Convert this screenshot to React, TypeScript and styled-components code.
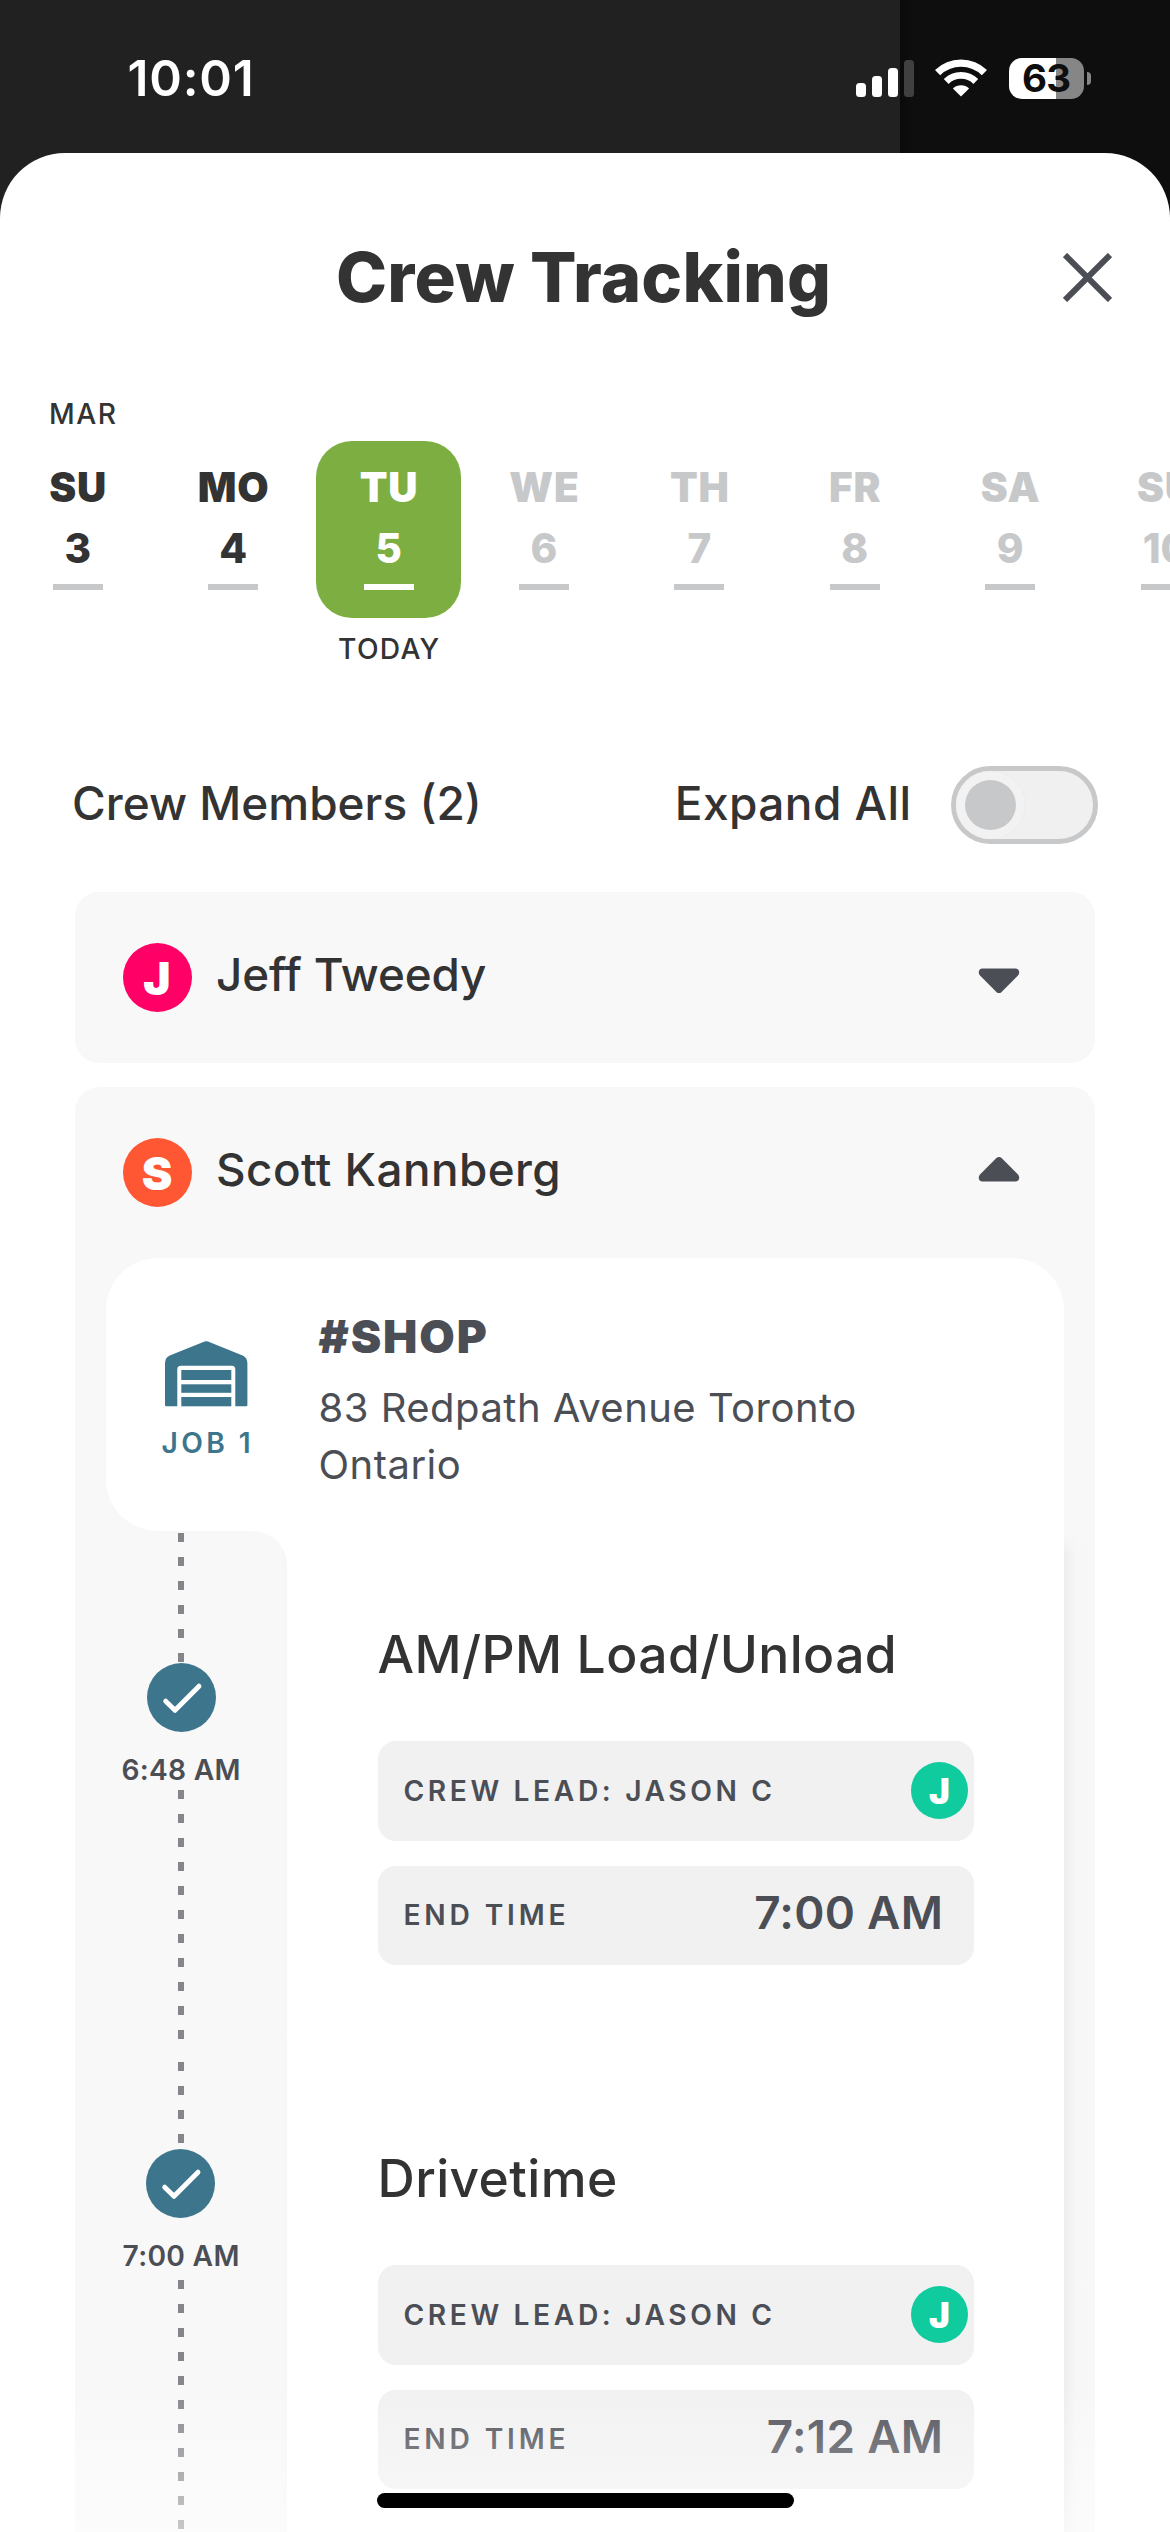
import styled, { createGlobalStyle } from "styled-components";

const ink = "#333333";
const slate = "#4c4e56";
const teal = "#3d768c";
const muted = "#c7c8ca";
const panel = "#f8f8f8";
const field = "#f1f1f1";

const GlobalStyle = createGlobalStyle`
  * { box-sizing: border-box; }
  html, body { margin: 0; padding: 0; background: #fff; }
  body { font-family: Inter, "Open Sans", sans-serif; color: ${ink}; }
`;

const Screen = styled.div`
  position: relative;
  display: flex;
  flex-direction: column;
  width: 1170px;
  height: 2532px;
  overflow: hidden;
  background: linear-gradient(90deg, #212121 900px, #0a0a0a 900px, #0e0e0e 912px);
`;

const Text = styled.span<{
  $size: number;
  $weight?: number;
  $spacing?: number;
  $line?: number;
  $color?: string;
}>`
  display: block;
  font-size: ${(p) => p.$size}px;
  font-weight: ${(p) => p.$weight ?? 600};
  letter-spacing: ${(p) => p.$spacing ?? 0}px;
  margin-right: ${(p) => -(p.$spacing ?? 0)}px;
  line-height: ${(p) => p.$line ?? 60}px;
  color: ${(p) => p.$color ?? ink};
  white-space: nowrap;
`;

/* Status bar */

const StatusBar = styled.div`
  display: flex;
  flex: none;
  align-items: center;
  justify-content: space-between;
  height: 153px;
  padding: 3px 79px 0 127.5px;
`;

const StatusIcons = styled.div`
  display: flex;
  align-items: center;
`;

const Bars = styled.div`
  display: flex;
  align-items: flex-end;
  gap: 6px;
  height: 37px;
  margin-right: 21px;
`;

const Bar = styled.span<{ $height: number; $dim?: boolean }>`
  width: 10px;
  height: ${(p) => p.$height}px;
  border-radius: 3.5px;
  background: ${(p) => (p.$dim ? "#404040" : "#fff")};
`;

const Battery = styled.div`
  display: flex;
  align-items: center;
  justify-content: center;
  width: 75px;
  height: 41px;
  margin-left: 22px;
  border-radius: 13px;
  background: linear-gradient(90deg, #fff 47px, #868686 47px);
`;

const BatteryNub = styled.span`
  width: 4px;
  height: 13px;
  margin-left: 3px;
  border-radius: 0 5px 5px 0;
  background: #868686;
`;

/* Sheet */

const Sheet = styled.main`
  display: flex;
  flex: 1;
  flex-direction: column;
  border-radius: 65px 65px 0 0;
  background: #fff;
  overflow: hidden;
`;

const Header = styled.header`
  display: grid;
  grid-template-columns: 1fr auto 1fr;
  flex: none;
  align-items: center;
  height: 248px;
  padding: 0 58px 0 55px;
`;

const CloseButton = styled.button`
  display: flex;
  grid-column: 3;
  justify-self: end;
  padding: 0;
  border: 0;
  background: none;
`;

const Month = styled.div`
  flex: none;
  height: 40px;
  padding-left: 49px;
`;

const Week = styled.div`
  display: flex;
  flex: none;
  gap: 10.9px;
  height: 232px;
  padding-left: 5.6px;
  overflow: hidden;
`;

const DayColumn = styled.div`
  display: flex;
  flex: none;
  flex-direction: column;
  align-items: center;
  gap: 18px;
  width: 144.5px;
`;

const DayTile = styled.div<{ $active?: boolean }>`
  display: flex;
  flex-direction: column;
  align-items: center;
  width: 100%;
  height: 177px;
  padding-top: 24px;
  border-radius: 36px;
  background: ${(p) => (p.$active ? "#7cae42" : "transparent")};
`;

const DayNumber = styled.div`
  margin: 15.5px 0 13.5px;
`;

const DayMark = styled.span<{ $active?: boolean }>`
  width: 50px;
  height: 6px;
  background: ${(p) => (p.$active ? "#fff" : muted)};
`;

const CrewBar = styled.div`
  display: flex;
  flex: none;
  align-items: center;
  justify-content: space-between;
  height: 78px;
  margin: 93px 72px 48px 72px;
`;

const ExpandAll = styled.label`
  display: flex;
  align-items: center;
  gap: 40px;
`;

const Raised = styled.div`
  padding-bottom: 5px;
`;

const Toggle = styled.span`
  display: flex;
  align-items: center;
  width: 147px;
  height: 78px;
  border: 5px solid ${muted};
  border-radius: 39px;
  background: #f0f0f0;
`;

const Knob = styled.span`
  width: 69px;
  height: 68px;
  border: 9px solid #f2f2f2;
  border-radius: 50%;
  background: ${muted};
  box-shadow: 0 0 1px #dcdcdc;
`;

/* Crew cards */

const CrewCard = styled.section<{ $open?: boolean }>`
  display: flex;
  flex: ${(p) => (p.$open ? "1" : "none")};
  flex-direction: column;
  margin: 0 75px ${(p) => (p.$open ? 0 : 24)}px;
  border-radius: ${(p) => (p.$open ? "24px 24px 0 0" : "24px")};
  background: ${panel};
`;

const CrewHeader = styled.div<{ $open?: boolean }>`
  display: flex;
  flex: none;
  align-items: center;
  height: 171px;
  padding: 0 75.5px 0 47.5px;

  > svg {
    margin-left: auto;
    margin-top: ${(p) => (p.$open ? -8 : 7)}px;
  }
`;

const Avatar = styled.span<{ $size: number; $color: string }>`
  display: flex;
  flex: none;
  align-items: center;
  justify-content: center;
  width: ${(p) => p.$size}px;
  height: ${(p) => p.$size}px;
  border-radius: 50%;
  background: ${(p) => p.$color};
`;

const CrewName = styled.div`
  padding: 0 0 6px 24.5px;
`;

const JobCard = styled.div`
  display: grid;
  grid-template-columns: 200px 1fr;
  flex: none;
  height: 273px;
  margin: 0 31px;
  border-radius: 52px 52px 0 52px;
  background: #fff;
`;

const JobBadge = styled.div`
  display: flex;
  flex-direction: column;
  align-items: center;
  gap: 16px;
  padding-top: 83px;
`;

const JobInfo = styled.div`
  display: flex;
  flex-direction: column;
  gap: 12px;
  padding: 49px 0 0 12.5px;
`;

const Address = styled.p`
  width: 620px;
  margin: 0;
  font-size: 40px;
  font-weight: 400;
  line-height: 57px;
  letter-spacing: 0.48px;
  color: ${slate};
`;

const Timeline = styled.div`
  display: grid;
  grid-template-columns: 212px 1fr 31px;
  flex: 1;
  background: #fff;
`;

const Rail = styled.div`
  display: flex;
  flex-direction: column;
  align-items: center;
  border-top-right-radius: 34px;
  background: linear-gradient(90deg, ${panel} 205px, #f6f6f6 212px);
`;

const Dots = styled.span<{ $height: number; $top?: number }>`
  width: 6px;
  height: ${(p) => p.$height}px;
  margin-top: ${(p) => p.$top ?? 0}px;
  background: repeating-linear-gradient(180deg, #85868a 0 9.5px, transparent 9.5px 24px);
`;

const Stop = styled.div<{ $top?: number }>`
  display: flex;
  flex-direction: column;
  align-items: center;
  margin-top: ${(p) => p.$top ?? 0}px;
`;

const Gutter = styled.div`
  background: linear-gradient(180deg, ${panel} 2px, transparent 24px),
    linear-gradient(90deg, #eeeeee, #f7f7f7 12px, ${panel});
`;

const Tasks = styled.div`
  display: flex;
  flex-direction: column;
`;

const Task = styled.article`
  display: flex;
  flex: none;
  flex-direction: column;
  height: 524px;
  padding: 93px 90px 0 90.5px;
`;

const TaskFields = styled.div`
  display: flex;
  flex-direction: column;
  gap: 25px;
  margin-top: 57px;
`;

const Field = styled.div<{ $right: number }>`
  display: flex;
  align-items: center;
  justify-content: space-between;
  height: 99.5px;
  padding: 0 ${(p) => p.$right}px 0 26px;
  border-radius: 18px;
  background: ${field};
`;

const BottomFade = styled.div`
  position: absolute;
  inset: auto 0 0;
  height: 150px;
  background: linear-gradient(180deg, rgba(255, 255, 255, 0), rgba(255, 255, 255, 0.55));
`;

const HomeIndicator = styled.div`
  position: absolute;
  bottom: 24px;
  left: 377px;
  width: 417px;
  height: 15px;
  border-radius: 8px;
  background: #000;
`;

const WifiIcon = () => (
  <svg width="52" height="38" viewBox="0 0 52 38" fill="none">
    <path d="M2.6 13.7A33.4 33.4 0 0 1 49.4 13.7" stroke="#fff" strokeWidth="7.4" />
    <path d="M11.2 22.5A21.1 21.1 0 0 1 40.8 22.5" stroke="#fff" strokeWidth="6.8" />
    <path d="M26 37.5L17.9 29.4A11.7 11.7 0 0 1 34.1 29.4Z" fill="#fff" />
  </svg>
);

const CloseIcon = () => (
  <svg width="49" height="49" viewBox="0 0 49 49">
    <path d="M2 2L47 47M47 2L2 47" stroke={slate} strokeWidth="6" />
  </svg>
);

const Caret = ({ up }: { up?: boolean }) => (
  <svg width="42" height="26" viewBox="0 0 42 26">
    <path
      transform={up ? "rotate(180 21 13)" : undefined}
      d="M4.5 0.5H37.5C41 0.5 42.5 4.5 40 7.5L23.6 23.9C22 25.5 20 25.5 18.4 23.9L2 7.5C-0.5 4.5 1 0.5 4.5 0.5Z"
      fill={slate}
    />
  </svg>
);

const GarageIcon = () => (
  <svg width="83" height="66" viewBox="0 0 83 66" fill={teal}>
    <path d="M39.6 0.6Q41.3 -0.1 43 0.6L77 14.3Q82.4 16.5 82.4 22V64Q82.4 65.3 81.1 65.3H70.3V28.2Q70.3 24.7 66.8 24.7H15.8Q12.3 24.7 12.3 28.2V65.3H1.3Q0 65.3 0 64V22Q0 16.5 5.4 14.3Z" />
    <rect x="16.3" y="29" width="50" height="10" />
    <rect x="16.3" y="43.3" width="50" height="8.5" />
    <rect x="16.3" y="56" width="50" height="9.3" />
  </svg>
);

const CheckIcon = () => (
  <svg width="69" height="69" viewBox="0 0 69 69" fill="none">
    <circle cx="34.5" cy="34.5" r="34.5" fill={teal} />
    <path
      d="M18.7 38.2L28 47.3L52 23.2"
      stroke="#fff"
      strokeWidth="4.9"
      strokeLinecap="round"
      strokeLinejoin="round"
    />
  </svg>
);

const days = [
  { name: "SU", date: 3, color: ink },
  { name: "MO", date: 4, color: ink },
  { name: "TU", date: 5, color: "#fff", active: true },
  { name: "WE", date: 6, color: muted },
  { name: "TH", date: 7, color: muted },
  { name: "FR", date: 8, color: muted },
  { name: "SA", date: 9, color: muted },
  { name: "SU", date: 10, color: muted },
];

const tasks = [
  { title: "AM/PM Load/Unload", end: "7:00 AM" },
  { title: "Drivetime", end: "7:12 AM" },
];

const MemberHeader = ({
  name,
  color,
  open,
}: {
  name: string;
  color: string;
  open?: boolean;
}) => (
  <CrewHeader $open={open}>
    <Avatar $size={69} $color={color}>
      <Text $size={46} $weight={900} $color="#fff">
        {name[0]}
      </Text>
    </Avatar>
    <CrewName>
      <Text $size={45.8} $weight={500} $spacing={open ? 0.45 : -0.1}>
        {name}
      </Text>
    </CrewName>
    <Caret up={open} />
  </CrewHeader>
);

const TimeStop = ({ time, top }: { time: string; top?: number }) => (
  <Stop $top={top}>
    <CheckIcon />
    <Text $size={28.2} $spacing={0.3} $line={77.5} $color={slate}>
      {time}
    </Text>
  </Stop>
);

export default function App() {
  return (
    <Screen>
      <GlobalStyle />
      <StatusBar>
        <Text $size={49.5} $weight={600} $spacing={0.8} $color="#fff">
          10:01
        </Text>
        <StatusIcons>
          <Bars>
            <Bar $height={14} />
            <Bar $height={21} />
            <Bar $height={29} />
            <Bar $height={37} $dim />
          </Bars>
          <WifiIcon />
          <Battery>
            <Text $size={38.5} $weight={700} $spacing={-0.8} $line={40} $color="#0e0e0e">
              63
            </Text>
          </Battery>
          <BatteryNub />
        </StatusIcons>
      </StatusBar>
      <Sheet>
        <Header>
          <span />
          <Text $size={68.8} $weight={800} $spacing={0.2} $line={84}>
            Crew Tracking
          </Text>
          <CloseButton aria-label="Close">
            <CloseIcon />
          </CloseButton>
        </Header>
        <Month>
          <Text $size={28.2} $weight={500} $spacing={1.5} $line={27}>
            MAR
          </Text>
        </Month>
        <Week>
          {days.map((day, i) => (
            <DayColumn key={i}>
              <DayTile $active={day.active}>
                <Text $size={40.5} $weight={900} $spacing={0.8} $line={45} $color={day.color}>
                  {day.name}
                </Text>
                <DayNumber>
                  <Text $size={40.5} $weight={800} $line={45} $color={day.color}>
                    {day.date}
                  </Text>
                </DayNumber>
                <DayMark $active={day.active} />
              </DayTile>
              {day.active && (
                <Text $size={28.2} $weight={500} $spacing={1.3} $line={27}>
                  TODAY
                </Text>
              )}
            </DayColumn>
          ))}
        </Week>
        <CrewBar>
          <Raised>
            <Text $size={46} $weight={500}>
              Crew Members (2)
            </Text>
          </Raised>
          <ExpandAll>
            <Raised>
              <Text $size={46} $weight={500} $spacing={0.4}>
                Expand All
              </Text>
            </Raised>
            <Toggle>
              <Knob />
            </Toggle>
          </ExpandAll>
        </CrewBar>
        <CrewCard>
          <MemberHeader name="Jeff Tweedy" color="#ff0066" />
        </CrewCard>
        <CrewCard $open>
          <MemberHeader name="Scott Kannberg" color="#ff5733" open />
          <JobCard>
            <JobBadge>
              <GarageIcon />
              <Text $size={28.2} $spacing={3.4} $line={41} $color={teal}>
                JOB 1
              </Text>
            </JobBadge>
            <JobInfo>
              <Text $size={45.8} $weight={900} $spacing={1.9} $color={slate}>
                #SHOP
              </Text>
              <Address>83 Redpath Avenue Toronto Ontario</Address>
            </JobInfo>
          </JobCard>
          <Timeline>
            <Rail>
              <Dots $height={130} $top={1.5} />
              <TimeStop time="6:48 AM" />
              <Dots $height={250} $top={-19.5} />
              <Dots $height={82} $top={22} />
              <TimeStop time="7:00 AM" top={5} />
              <Dots $height={252} $top={-15} />
            </Rail>
            <Tasks>
              {tasks.map((task) => (
                <Task key={task.title}>
                  <Text $size={51.6} $weight={500} $spacing={0.4}>
                    {task.title}
                  </Text>
                  <TaskFields>
                    <Field $right={6}>
                      <Text $size={28.2} $spacing={3.6} $color={slate}>
                        CREW LEAD: JASON C
                      </Text>
                      <Avatar $size={57} $color="#0fcb9d">
                        <Text $size={35} $weight={900} $color="#fff">
                          J
                        </Text>
                      </Avatar>
                    </Field>
                    <Field $right={31}>
                      <Text $size={28.2} $spacing={3.8} $color={slate}>
                        END TIME
                      </Text>
                      <Raised>
                        <Text $size={45.8} $spacing={0.3} $color={slate}>
                          {task.end}
                        </Text>
                      </Raised>
                    </Field>
                  </TaskFields>
                </Task>
              ))}
            </Tasks>
            <Gutter />
          </Timeline>
        </CrewCard>
      </Sheet>
      <BottomFade />
      <HomeIndicator />
    </Screen>
  );
}
